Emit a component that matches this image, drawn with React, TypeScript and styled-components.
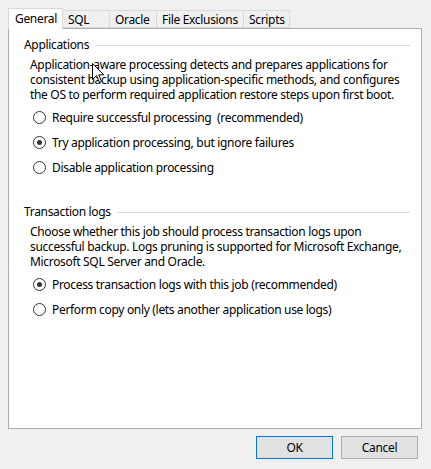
import React from "react";
import styled, { createGlobalStyle } from "styled-components";

const Global = createGlobalStyle`
  html, body { margin: 0; padding: 0; background: #f0f0f0; }
  body { font-family: "Noto Sans", "Open Sans", sans-serif; font-size: 12px; letter-spacing: -0.32px; color: #000; }
  #root { width: 431px; height: 469px; }
`;

const Window = styled.div`
  width: 431px;
  height: 469px;
  box-sizing: border-box;
  padding: 8px 9px 0 8px;
  display: flex;
  flex-direction: column;
  position: relative;
  background: #f0f0f0;
`;

const TabStrip = styled.div`
  display: flex;
  align-items: flex-end;
  height: 20px;
  position: relative;
  z-index: 1;
`;

const Tab = styled.div<{ $active?: boolean; $w: number }>`
  box-sizing: border-box;
  width: ${(p) => p.$w}px;
  height: ${(p) => (p.$active ? 21 : 18)}px;
  margin-bottom: ${(p) => (p.$active ? -1 : 0)}px;
  margin-left: -1px;
  &:first-child { margin-left: 0; }
  background: ${(p) => (p.$active ? "#fff" : "#f0f0f0")};
  border: 1px solid #d9d9d9;
  border-bottom: ${(p) => (p.$active ? "none" : "1px solid #d9d9d9")};
  display: flex;
  align-items: center;
  padding-left: ${(p) => (p.$active ? 6 : 5)}px;
  padding-bottom: ${(p) => (p.$active ? 2 : 0)}px;
  font-size: 12px;
  line-height: 15px;
  white-space: nowrap;
  position: relative;
  z-index: ${(p) => (p.$active ? 2 : 1)};
`;

const Panel = styled.div`
  box-sizing: border-box;
  height: 401px;
  background: #fff;
  border: 1px solid #adadad;
  padding: 8px 11px 0 15px;
  display: flex;
  flex-direction: column;
`;

const Group = styled.section<{ $top?: number }>`
  display: flex;
  flex-direction: column;
  margin-top: ${(p) => p.$top ?? 0}px;
`;

const GroupHeader = styled.div`
  display: flex;
  align-items: center;
  gap: 6px;
  line-height: 15px;
  white-space: nowrap;
  &::after {
    content: "";
    flex: 1;
    height: 1px;
    background: #dcdcdc;
    margin-top: 1px;
  }
`;

const Description = styled.p`
  margin: 5px 0 0 6px;
  line-height: 15px;
  white-space: nowrap;
`;

const Options = styled.div`
  display: flex;
  flex-direction: column;
  margin: 3px 0 0 9px;
`;

const OptionRow = styled.label`
  display: flex;
  align-items: center;
  height: 25px;
  gap: 6px;
  line-height: 15px;
  white-space: pre;
`;

const Radio = styled.span<{ $checked?: boolean }>`
  box-sizing: border-box;
  width: 13px;
  height: 13px;
  border-radius: 50%;
  border: 1px solid #333;
  background: #fff;
  display: flex;
  align-items: center;
  justify-content: center;
  &::after {
    content: "";
    width: 5px;
    height: 5px;
    border-radius: 50%;
    background: ${(p) => (p.$checked ? "#333" : "transparent")};
  }
`;

const ButtonBar = styled.div`
  display: flex;
  justify-content: flex-end;
  gap: 8px;
  margin-top: 7px;
  padding-right: 4px;
`;

const Button = styled.button<{ $default?: boolean }>`
  box-sizing: border-box;
  width: 77px;
  height: 23px;
  background: #e1e1e1;
  border: 1px solid ${(p) => (p.$default ? "#0078d7" : "#adadad")};
  font-family: "Noto Sans", "Open Sans", sans-serif;
  font-size: 12px;
  letter-spacing: -0.32px;
  color: #000;
  padding: 0;
  line-height: 15px;
`;

const Cursor = styled.svg`
  position: absolute;
  left: 92px;
  top: 63px;
  z-index: 5;
`;

const options1 = [
  { label: "Require successful processing  (recommended)", checked: false },
  { label: "Try application processing, but ignore failures", checked: true },
  { label: "Disable application processing", checked: false },
];
const options2 = [
  { label: "Process transaction logs with this job (recommended)", checked: true },
  { label: "Perform copy only (lets another application use logs)", checked: false },
];

const tabs = [
  { name: "General", w: 55, active: true },
  { name: "SQL", w: 48 },
  { name: "Oracle", w: 48 },
  { name: "File Exclusions", w: 88 },
  { name: "Scripts", w: 47 },
];

const desc1 = [
  "Application-aware processing detects and prepares applications for",
  "consistent backup using application-specific methods, and configures",
  "the OS to perform required application restore steps upon first boot.",
];
const desc2 = [
  "Choose whether this job should process transaction logs upon",
  "successful backup. Logs pruning is supported for Microsoft Exchange,",
  "Microsoft SQL Server and Oracle.",
];

const Lines = ({ lines }: { lines: string[] }) => (
  <>
    {lines.map((l, i) => (
      <React.Fragment key={i}>
        {l}
        {i < lines.length - 1 && <br />}
      </React.Fragment>
    ))}
  </>
);

export default function App() {
  return (
    <>
      <Global />
      <Window>
        <TabStrip>
          {tabs.map((t) => (
            <Tab key={t.name} $active={t.active} $w={t.w}>
              {t.name}
            </Tab>
          ))}
        </TabStrip>
        <Panel>
          <Group>
            <GroupHeader>Applications</GroupHeader>
            <Description>
              <Lines lines={desc1} />
            </Description>
            <Options>
              {options1.map((o) => (
                <OptionRow key={o.label}>
                  <Radio $checked={o.checked} />
                  {o.label}
                </OptionRow>
              ))}
            </Options>
          </Group>
          <Group $top={24}>
            <GroupHeader>Transaction logs</GroupHeader>
            <Description>
              <Lines lines={desc2} />
            </Description>
            <Options>
              {options2.map((o) => (
                <OptionRow key={o.label}>
                  <Radio $checked={o.checked} />
                  {o.label}
                </OptionRow>
              ))}
            </Options>
          </Group>
        </Panel>
        <ButtonBar>
          <Button $default>OK</Button>
          <Button>Cancel</Button>
        </ButtonBar>
        <Cursor width="13" height="21" viewBox="0 0 13 21">
          <path d="M0.5 0.5 L0.5 16.5 L4.5 12.5 L7.5 19.5 L9.5 18.5 L6.8 11.8 L11.8 11.8 Z" fill="#fff" stroke="#000" strokeWidth="1" />
        </Cursor>
      </Window>
    </>
  );
}
